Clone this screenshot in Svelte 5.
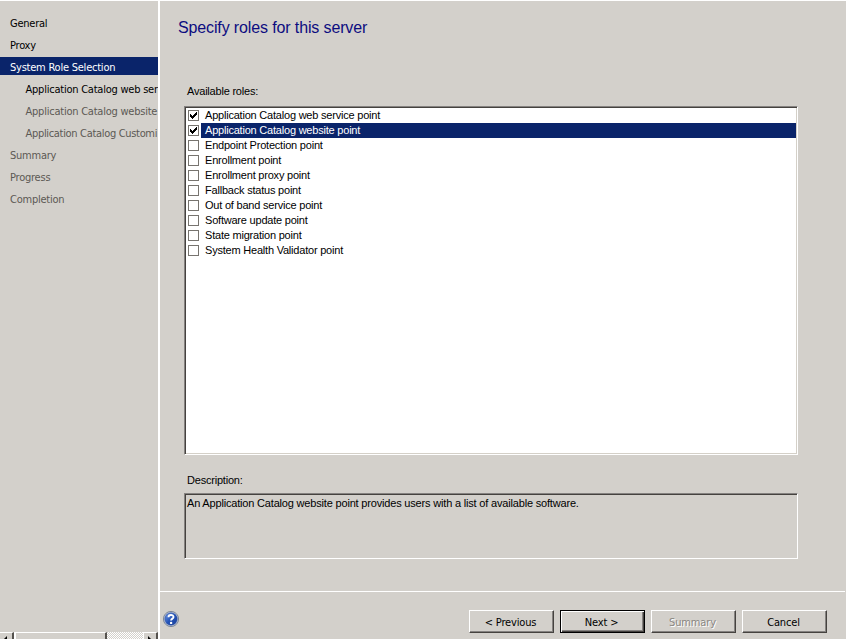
<script lang="ts">
    type Step = {
        label: string;
        state: 'ready' | 'current' | 'pending';
        nested?: boolean;
        tight?: boolean;
    };

    const steps: Step[] = [
        { label: 'General', state: 'ready' },
        { label: 'Proxy', state: 'ready' },
        { label: 'System Role Selection', state: 'current' },
        { label: 'Application Catalog web ser', state: 'ready', nested: true },
        { label: 'Application Catalog website', state: 'pending', nested: true },
        { label: 'Application Catalog Customi', state: 'pending', nested: true, tight: true },
        { label: 'Summary', state: 'pending' },
        { label: 'Progress', state: 'pending' },
        { label: 'Completion', state: 'pending' }
    ];

    let roles = $state([
        { name: 'Application Catalog web service point', checked: true },
        { name: 'Application Catalog website point', checked: true },
        { name: 'Endpoint Protection point', checked: false },
        { name: 'Enrollment point', checked: false },
        { name: 'Enrollment proxy point', checked: false },
        { name: 'Fallback status point', checked: false },
        { name: 'Out of band service point', checked: false },
        { name: 'Software update point', checked: false },
        { name: 'State migration point', checked: false },
        { name: 'System Health Validator point', checked: false }
    ]);

    let selected = $state(1);

    function toggle(i: number) {
        selected = i;
        roles[i].checked = !roles[i].checked;
    }
</script>

<div class="wizard">
    <aside class="sidebar">
        <nav class="steps">
            {#each steps as step}
                <div class="step {step.state}" class:nested={step.nested} class:tight={step.tight}>{step.label}</div>
            {/each}
        </nav>
        <div class="scrollbar">
            <div class="arrow left">
                <svg width="5" height="8" viewBox="0 0 5 8"><path d="M4 0v8L0 4z" /></svg>
            </div>
            <div class="thumb"></div>
            <div class="track"></div>
            <div class="arrow right">
                <svg width="5" height="8" viewBox="0 0 5 8"><path d="M0 0v8l4-4z" /></svg>
            </div>
        </div>
    </aside>

    <main class="content">
        <section class="page">
            <h1>Specify roles for this server</h1>

            <div class="label">Available roles:</div>
            <div class="roles">
                {#each roles as role, i}
                    <div class="role" class:selected={i === selected}>
                        <button class="check" aria-label={role.name} onclick={() => toggle(i)}>
                            {#if role.checked}
                                <svg width="7" height="7" viewBox="0 0 7 7" shape-rendering="crispEdges">
                                    <path d="M0 2h1v1h1v1h1v-1h1v-1h1v-1h1v-1h1v3h-1v1h-1v1h-1v1h-1v1h-1v-1h-1v-1h-1z" />
                                </svg>
                            {/if}
                        </button>
                        <span class="name">{role.name}</span>
                    </div>
                {/each}
            </div>

            <div class="label below">Description:</div>
            <div class="description">
                An Application Catalog website point provides users with a list of available software.
            </div>
        </section>

        <footer class="footer">
            <svg class="help" width="18" height="18" viewBox="0 0 18 18">
                <defs>
                    <linearGradient id="ball" x1="0" y1="0" x2="1" y2="1">
                        <stop offset="0" stop-color="#7a9fe8" />
                        <stop offset="0.5" stop-color="#2353b8" />
                        <stop offset="1" stop-color="#1a3f98" />
                    </linearGradient>
                </defs>
                <circle cx="9" cy="9" r="7.6" fill="#c3cde0" stroke="#7e8898" />
                <circle cx="9" cy="9" r="6.2" fill="url(#ball)" stroke="#2b4c98" stroke-width="0.6" />
                <path d="M6.5 7.3C6.5 4.3 11.5 4.4 11.5 7C11.5 8.7 9.1 8.6 9.1 10.6" fill="none" stroke="#fff" stroke-width="1.9" />
                <circle cx="9.1" cy="12.9" r="1.2" fill="#fff" />
            </svg>
            <div class="buttons">
                <button class="btn">&lt; Previous</button>
                <button class="btn default">Next &gt;</button>
                <button class="btn" disabled>Summary</button>
                <button class="btn">Cancel</button>
            </div>
        </footer>
    </main>
</div>

<style>
    :global(body) {
        margin: 0;
        background: #d4d0c8;
    }

    .wizard {
        --face: #d3d0cb;
        --navy: #0a246a;
        display: flex;
        box-sizing: border-box;
        width: 846px;
        height: 639px;
        overflow: hidden;
        border-top: 1px solid #fff;
        background: var(--face);
        color: #000;
        font-family: "Liberation Sans", Arial, sans-serif;
        font-size: 11px;
        letter-spacing: -0.21px;
    }

    /* Left hand step list */
    .sidebar {
        display: flex;
        flex-direction: column;
        justify-content: space-between;
        width: 158px;
        overflow: hidden;
        border-right: 2px solid #fff;
        font-family: "DejaVu Sans Condensed", Tahoma, sans-serif;
        font-stretch: condensed;
        font-size: 11px;
        letter-spacing: -0.23px;
    }
    .steps {
        display: flex;
        flex-direction: column;
        gap: 4px;
        padding-top: 12px;
    }
    .step {
        box-sizing: border-box;
        height: 18px;
        padding: 1px 0 0 10px;
        line-height: 19px;
        white-space: nowrap;
    }
    .nested {
        padding-left: 25.5px;
    }
    .tight {
        letter-spacing: -0.32px;
    }
    .current {
        background: var(--navy);
        color: #fff;
    }
    .pending {
        color: #5c5954;
    }

    /* Only the top of the horizontal scrollbar is in view */
    .scrollbar {
        display: flex;
        height: 7px;
    }
    .arrow,
    .thumb {
        box-sizing: border-box;
        height: 16px;
        border-top: 1px solid #fff;
        border-right: 2px solid #55524e;
    }
    .arrow {
        width: 14px;
    }
    .arrow svg {
        display: block;
        margin: 3px 0 0 3px;
    }
    .right {
        width: 15px;
        border-left: 1px solid #fff;
    }
    .right svg {
        margin-left: 4px;
    }
    .thumb {
        width: 93px;
        border-left: 2px solid #fff;
    }
    .track {
        flex: 1;
        background: repeating-conic-gradient(#fff 0 25%, var(--face) 0 50%) 0 0 / 2px 2px;
    }

    .content {
        display: flex;
        flex: 1;
        flex-direction: column;
    }
    .page {
        flex: 1;
        padding: 16px 48px 0 24px;
    }
    h1 {
        height: 22px;
        margin: 0 0 42px -6px;
        color: #0c0c80;
        font-size: 16px;
        font-weight: normal;
        line-height: 22px;
        letter-spacing: -0.13px;
    }
    .label {
        height: 25px;
        padding-left: 3px;
        line-height: 21px;
    }
    .below {
        height: 22px;
        line-height: 19px;
    }
    .roles,
    .description {
        box-sizing: border-box;
        border: 1px solid;
        border-color: #858280 #fff #fff #858280;
        box-shadow: inset 1px 1px #45423f;
    }
    .roles {
        height: 349px;
        margin-bottom: 16px;
        padding: 1px;
        background: #fff;
        box-shadow: inset 1px 1px #45423f, inset -1px -1px #d4d0c8;
    }
    .role {
        display: flex;
        height: 15px;
        padding-left: 2px;
        gap: 2px;
    }
    .check {
        display: flex;
        align-items: center;
        justify-content: center;
        box-sizing: border-box;
        width: 11px;
        height: 11px;
        margin-top: 2px;
        padding: 0;
        border: 1px solid #77746f;
        background: #fff;
    }
    .name {
        flex: 1;
        padding-left: 4px;
        line-height: 15px;
    }
    .selected .name {
        background: var(--navy);
        color: #fff;
    }
    .description {
        height: 66px;
        padding: 2px;
        line-height: 15px;
        letter-spacing: -0.18px;
    }

    .footer {
        display: flex;
        box-sizing: border-box;
        justify-content: space-between;
        height: 48px;
        margin-right: 1px;
        padding: 18px 18px 0 2px;
        border-top: 1px solid #fff;
    }
    .buttons {
        display: flex;
        gap: 6px;
    }
    .btn {
        box-sizing: border-box;
        width: 85px;
        height: 23px;
        padding: 2px 2px 0 0;
        border: 1px solid;
        border-color: #fff #45423f #45423f #fff;
        background: var(--face);
        box-shadow: inset -1px -1px #858280;
        color: #000;
        font-family: "DejaVu Sans Condensed", Tahoma, sans-serif;
        font-stretch: condensed;
        font-size: 11px;
        letter-spacing: -0.15px;
    }
    .default {
        border-color: #000;
        box-shadow: inset 1px 1px #fff, inset -1px -1px #45423f, inset -2px -2px #858280;
    }
    .btn:disabled {
        color: #8a8782;
        text-shadow: 1px 1px #fff;
    }
</style>
